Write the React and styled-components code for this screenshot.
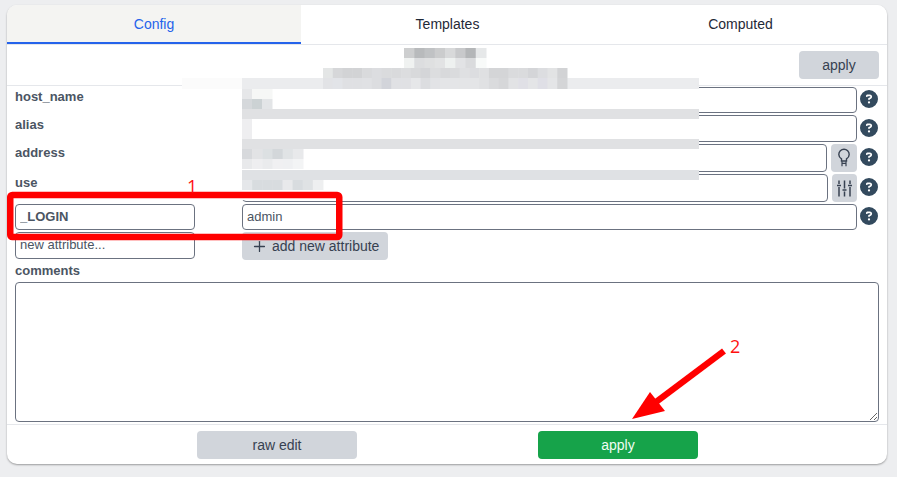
import React from "react";
import styled, { createGlobalStyle } from "styled-components";
import { FaCircleQuestion } from "react-icons/fa6";
import { Plus } from "lucide-react";

const Global = createGlobalStyle`
  html, body { margin: 0; padding: 0; background: #edeef0; }
  body { font-family: "Liberation Sans", Arial, sans-serif; width: 897px; height: 477px; overflow: hidden; position: relative; }
`;

const Card = styled.main`
  box-sizing: border-box;
  width: 880px;
  height: 459px;
  margin: 5px 0 0 7px;
  background: #fff;
  border-radius: 10px;
  box-shadow: 0 1px 2px rgba(0, 0, 0, 0.35);
  overflow: hidden;
  display: flex;
  flex-direction: column;
`;

const TabBar = styled.nav`
  display: grid;
  grid-template-columns: 294px 1fr 1fr;
  height: 40px;
  box-sizing: border-box;
  border-bottom: 1px solid #e5e7eb;
`;

const Tab = styled.div`
  box-sizing: border-box;
  height: 39px;
  display: flex;
  align-items: center;
  justify-content: center;
  padding-bottom: ${(p) => (p.$active ? "0" : "2px")};
  font-size: 14px;
  color: ${(p) => (p.$active ? "#2563eb" : "#1f2937")};
  background: ${(p) => (p.$active ? "#f4f4f2" : "#fff")};
  border-bottom: ${(p) => (p.$active ? "2px solid #2563eb" : "0")};
`;

const Toolbar = styled.div`
  box-sizing: border-box;
  height: 41px;
  padding: 6px 8px 0;
  display: flex;
  justify-content: flex-end;
  align-items: flex-start;
  border-bottom: 1px solid #e5e7eb;
`;

const Button = styled.button`
  box-sizing: border-box;
  width: ${(p) => p.$w || 160}px;
  height: 28px;
  padding: 0;
  border: 0;
  border-radius: 4px;
  font: 14px "Liberation Sans", Arial, sans-serif;
  color: ${(p) => (p.$green ? "#f0fdf4" : "#374151")};
  background: ${(p) => (p.$green ? "#16a34a" : "#d1d5db")};
`;

const Form = styled.form`
  flex: 1;
  padding: 1px 8px 0;
  display: flex;
  flex-direction: column;
  margin: 0;
`;

const Rows = styled.div`
  display: flex;
  flex-direction: column;
  gap: 2px;
`;

const Row = styled.div`
  display: grid;
  grid-template-columns: 180px 1fr;
  column-gap: 47px;
  height: ${(p) => p.$h}px;
`;

const Label = styled.label`
  display: block;
  padding-top: ${(p) => p.$top || 0}px;
  font-size: 13px;
  line-height: 18px;
  font-weight: 700;
  color: #4b5563;
`;

const Field = styled.div`
  display: flex;
  align-items: flex-start;
  height: 100%;
`;

const Input = styled.input`
  box-sizing: border-box;
  flex: 1;
  min-width: 0;
  width: 100%;
  height: ${(p) => p.$h || 26}px;
  padding: 0 4px 2px;
  border: 1px solid #6b7280;
  border-radius: 4px;
  background: #fff;
  font: ${(p) => (p.$bold ? 700 : 400)} 13px "Liberation Sans", Arial, sans-serif;
  color: #4b5563;
  outline: none;
  &::placeholder { color: #4b5563; opacity: 1; }
`;

const IconButton = styled.button`
  box-sizing: border-box;
  width: ${(p) => p.$w}px;
  height: 28px;
  margin-left: 4px;
  padding: 0;
  border: 0;
  border-radius: 4px;
  background: #d1d5db;
  color: #374151;
  display: flex;
  align-items: center;
  justify-content: center;
`;

const Help = styled.span`
  flex: none;
  width: 18px;
  height: 18px;
  margin: ${(p) => p.$top}px 1px 0 3px;
  color: #334a5e;
  display: flex;
  background: radial-gradient(circle, #fff 45%, transparent 46%);
  border-radius: 50%;
`;

const AddButton = styled(Button)`
  width: 146px;
  display: flex;
  align-items: center;
  justify-content: flex-start;
  gap: 4px;
  padding-left: 9px;
`;

const CommentLabel = styled(Label)`
  margin-top: 2px;
  height: 20px;
  line-height: 18px;
`;

const Textarea = styled.textarea`
  box-sizing: border-box;
  display: block;
  width: 100%;
  height: 140px;
  margin: 0;
  padding: 4px;
  border: 1px solid #6b7280;
  border-radius: 4px;
  outline: none;
  resize: vertical;
`;

const Footer = styled.footer`
  box-sizing: border-box;
  height: 40px;
  margin-top: auto;
  padding: 6px 0 0 1px;
  display: flex;
  justify-content: center;
  gap: 181px;
  border-top: 1px solid #e5e7eb;
`;

const Overlay = styled.svg`
  position: absolute;
  left: 0;
  top: 0;
  pointer-events: none;
`;

const Note = styled.text`
  font-family: "Open Sans", sans-serif;
  font-size: 18px;
  fill: #ff1010;
`;

const BulbIcon = () => (
  <svg width="14" height="20" viewBox="0 0 14 20" fill="none" stroke="currentColor" strokeWidth="1.4">
    <path d="M4.5 13v-2.2C3 9.8 1.8 8.4 1.8 6.4a5.2 5.2 0 0 1 10.4 0c0 2-1.2 3.4-2.7 4.4V13z" />
    <path d="M4.5 15.4h5M5 13.2v5M9 13.2v5" strokeWidth="1.2" />
  </svg>
);

const SlidersIcon = () => (
  <svg width="15" height="17" viewBox="0 0 15 17" fill="none" stroke="currentColor" strokeWidth="1.5">
    <path d="M2 0.5v3.5M0 5.5h4M2 7v9.5" />
    <path d="M7.5 0.5v8M5.5 10h4M7.5 11.5v5" />
    <path d="M13 0.5v3.5M11 5.5h4M13 7v9.5" />
  </svg>
);

const cells = [
  [404, 48, 10.25, 10, ["#cdcecf", "#b8babc", "#c0c2c4", "#cbcccd", "#d8d9da", "#c8c9cb", "#b4b6b8", "#e6e8e9"]],
  [404, 58, 10.25, 10, ["#f0f2f1", "#dcdddf", "#dfe0e1", "#e2e3e4", "#eef1f0", "#e2e3e5", "#dadbdd", "#f8faf9"]],
  [323, 68, 9.76, 10, ["#e4e6e6", "#d6d7d9", "#d2d3d5", "#d2d3d5", "#d9dadc", "#dcdde0", "#dadbdd", "#d9dadc", "#dcdddf", "#d8d9db", "#d4d5d8", "#dcdddf", "#d8d9db", "#dadbdd", "#dfe0e2", "#dcdde0", "#dfe0e2", "#d4d5d7", "#d4d5d7", "#dadbdd", "#dadbdd", "#d4d5d8", "#dcdde0", "#e2e3e4", "#d2d3d5"]],
  [323, 78, 9.76, 11, ["#e2e3e6", "#e2e4e8", "#dfe0e3", "#dfe0e3", "#e0e1e4", "#dcdde0", "#d2d4da", "#e0e1e4", "#e0e1e4", "#e6e7e9", "#dcdde0", "#e2e3e6", "#e4e5e7", "#e4e5e7", "#e4e5e7", "#e4e5e7", "#e0e1e3", "#dadbdd", "#d6d7d9", "#e2e3e5", "#e0e0e6", "#e4e5e7", "#dfdfe6", "#e4e5e7", "#d4d5d7"]],
  [242, 89, 10, 10, ["#e6e7e9", "#f6f7f6", "#f6f7f6"]],
  [242, 99, 10, 10, ["#d5d8db", "#ccd2d4", "#e3e5e7"]],
  [242, 149, 10.17, 10, ["#d7d9dc", "#e2e3e5", "#dce0e2", "#d3d7da", "#e0e3e5", "#e8e9eb"]],
  [242, 159, 10.17, 10, ["#e8e9eb", "#eeeef0", "#eaebed", "#f0f0f2", "#eff0f2", "#f3f4f5"]],
  [242, 180, 10.12, 10, ["#e5e7ea", "#d8dcdf", "#d8dcdf", "#d8dcdf", "#e8e9eb", "#d8dcdf", "#dfe2e4", "#eeeff0"]],
];

const bands = [
  { x: 242, y: 78, w: 457, h: 122, fill: "#fff" },
  { x: 182, y: 78, w: 60, h: 11, fill: "#fbfbfb" },
  { x: 242, y: 78, w: 457, h: 11, fill: "#ebecee" },
  { x: 242, y: 109, w: 457, h: 10, fill: "#e0e1e3" },
  { x: 242, y: 119, w: 10, h: 20, fill: "#eeeef0" },
  { x: 242, y: 139, w: 457, h: 10, fill: "#e0e1e3" },
  { x: 242, y: 170, w: 457, h: 10, fill: "#dfe1e4" },
];

const rows = [
  { name: "host_name", h: 26, top: 1, help: 3 },
  { name: "alias", h: 27, input: 27, top: 1, help: 4 },
  { name: "address", h: 28, input: 28, help: 4, icon: <BulbIcon />, w: 26 },
  { name: "use", h: 28, input: 28, help: 4, icon: <SlidersIcon />, w: 25 },
];

export default function App() {
  return (
    <>
      <Global />
      <Card>
        <TabBar>
          <Tab $active>Config</Tab>
          <Tab>Templates</Tab>
          <Tab>Computed</Tab>
        </TabBar>
        <Toolbar>
          <Button type="button" $w={80}>apply</Button>
        </Toolbar>
        <Form>
          <Rows>
            {rows.map((r) => (
              <Row key={r.name} $h={r.h}>
                <Label $top={r.top}>{r.name}</Label>
                <Field>
                  <Input $h={r.input} defaultValue="" />
                  {r.icon && <IconButton type="button" $w={r.w}>{r.icon}</IconButton>}
                  <Help $top={r.help}><FaCircleQuestion size={18} /></Help>
                </Field>
              </Row>
            ))}
            <Row $h={26}>
              <Input $bold defaultValue="_LOGIN" />
              <Field>
                <Input defaultValue="admin" />
                <Help $top={3}><FaCircleQuestion size={18} /></Help>
              </Field>
            </Row>
            <Row $h={28}>
              <Input $h={27} placeholder="new attribute..." />
              <Field>
                <AddButton type="button">
                  <Plus size={17} strokeWidth={1.8} />
                  add new attribute
                </AddButton>
              </Field>
            </Row>
          </Rows>
          <CommentLabel>comments</CommentLabel>
          <Textarea />
        </Form>
        <Footer>
          <Button type="button">raw edit</Button>
          <Button type="button" $green>apply</Button>
        </Footer>
      </Card>
      <Overlay width="897" height="477" viewBox="0 0 897 477">
        {bands.map((b, i) => (
          <rect key={i} x={b.x} y={b.y} width={b.w} height={b.h} fill={b.fill} />
        ))}
        {cells.map(([x, y, w, h, colors], i) =>
          colors.map((c, j) => (
            <rect key={`${i}-${j}`} x={x + j * w} y={y} width={w + 0.5} height={h} fill={c} />
          ))
        )}
        <rect x="10.25" y="195" width="329" height="42" rx="2" fill="none" stroke="#ff0000" strokeWidth="6.5" />
        <Note x="187" y="193">1</Note>
        <Note x="730" y="353">2</Note>
        <line x1="724" y1="351" x2="656" y2="402" stroke="#ff0000" strokeWidth="6.5" />
        <polygon points="632,419 650,392 665,411" fill="#ff0000" />
      </Overlay>
    </>
  );
}
